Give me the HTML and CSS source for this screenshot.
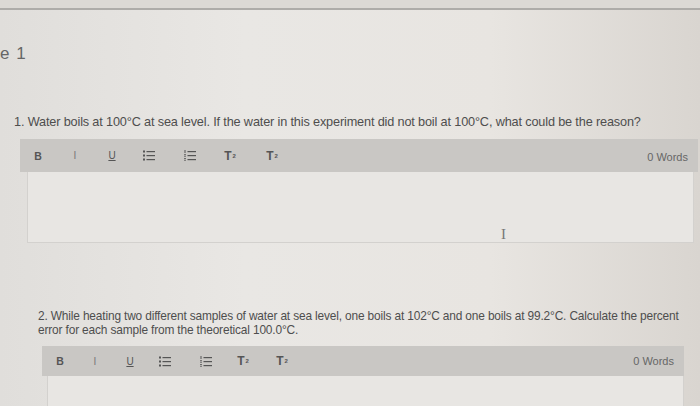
FILE: index.html
```html
<!DOCTYPE html>
<html>
<head>
<meta charset="utf-8">
<link rel="stylesheet" href="styles.css">
</head>
<body>
<div class="page">
  <div class="topstrip"></div>
  <div class="title">e 1</div>

  <section class="q q1">
    <p class="prompt">1. Water boils at 100°C at sea level. If the water in this experiment did not boil at 100°C, what could be the reason?</p>
    <div class="editor">
      <div class="toolbar">
        <div class="tools">
          <span class="tool b">B</span>
          <span class="tool i">I</span>
          <span class="tool u">U</span>
          <span class="tool ul"><svg width="12" height="11" viewBox="0 0 12 11"><g fill="#555"><rect x="0" y="0.5" width="2" height="2"/><rect x="0" y="4.5" width="2" height="2"/><rect x="0" y="8.5" width="2" height="2"/><rect x="3.5" y="1" width="8.5" height="1.2"/><rect x="3.5" y="5" width="8.5" height="1.2"/><rect x="3.5" y="9" width="8.5" height="1.2"/></g></svg></span>
          <span class="tool ol"><svg width="12" height="11" viewBox="0 0 12 11"><g fill="#555"><rect x="0.5" y="0" width="1" height="3"/><rect x="0" y="4.3" width="2" height="0.8"/><rect x="0" y="5.8" width="2" height="0.8"/><rect x="0" y="8" width="2" height="0.8"/><rect x="0" y="9.8" width="2" height="0.8"/><rect x="3.5" y="1" width="8.5" height="1.2"/><rect x="3.5" y="5" width="8.5" height="1.2"/><rect x="3.5" y="9" width="8.5" height="1.2"/></g></svg></span>
          <span class="tool t tsup">T<sup>2</sup></span>
          <span class="tool t tsub">T<sub>2</sub></span>
        </div>
        <span class="words">0 Words</span>
      </div>
      <div class="body body1"><span class="cursor">I</span></div>
    </div>
  </section>

  <section class="q q2">
    <p class="prompt">2. While heating two different samples of water at sea level, one boils at 102°C and one boils at 99.2°C. Calculate the percent error for each sample from the theoretical 100.0°C.</p>
    <div class="editor">
      <div class="toolbar">
        <div class="tools">
          <span class="tool b">B</span>
          <span class="tool i">I</span>
          <span class="tool u">U</span>
          <span class="tool ul"><svg width="12" height="11" viewBox="0 0 12 11"><g fill="#555"><rect x="0" y="0.5" width="2" height="2"/><rect x="0" y="4.5" width="2" height="2"/><rect x="0" y="8.5" width="2" height="2"/><rect x="3.5" y="1" width="8.5" height="1.2"/><rect x="3.5" y="5" width="8.5" height="1.2"/><rect x="3.5" y="9" width="8.5" height="1.2"/></g></svg></span>
          <span class="tool ol"><svg width="12" height="11" viewBox="0 0 12 11"><g fill="#555"><rect x="0.5" y="0" width="1" height="3"/><rect x="0" y="4.3" width="2" height="0.8"/><rect x="0" y="5.8" width="2" height="0.8"/><rect x="0" y="8" width="2" height="0.8"/><rect x="0" y="9.8" width="2" height="0.8"/><rect x="3.5" y="1" width="8.5" height="1.2"/><rect x="3.5" y="5" width="8.5" height="1.2"/><rect x="3.5" y="9" width="8.5" height="1.2"/></g></svg></span>
          <span class="tool t tsup">T<sup>2</sup></span>
          <span class="tool t tsub">T<sub>2</sub></span>
        </div>
        <span class="words">0 Words</span>
      </div>
      <div class="body body2"></div>
    </div>
  </section>
</div>
</body>
</html>
```

FILE: styles.css
```css
* { box-sizing: border-box; }
html, body { margin: 0; padding: 0; }
body {
  width: 700px;
  height: 406px;
  overflow: hidden;
  font-family: "Liberation Sans", Arial, sans-serif;
  color: #555;
  background: linear-gradient(90deg, #e0dedb 0%, #e9e7e4 35%, #e8e5e1 70%, #d9d5d0 100%);
}
.page { display: flex; flex-direction: column; }
.topstrip {
  height: 10px;
  background: #dcd9d5;
  border-bottom: 2px solid #aeaca9;
}
.title {
  margin-top: 34px;
  font-size: 17px;
  line-height: 20px;
  color: #666;
  letter-spacing: 1px;
}
.q { display: flex; flex-direction: column; }
.prompt { margin: 0; }
.q1 { margin-top: 50px; padding-left: 14px; padding-right: 2px; }
.q1 .prompt { font-size: 12.7px; line-height: 16px; color: #4e4e4e; letter-spacing: -0.15px; white-space: nowrap; }
.q1 .editor { margin-top: 9px; margin-left: 6px; }
.toolbar {
  display: flex;
  align-items: center;
  justify-content: space-between;
  background: #c9c7c4;
}
.tools { display: flex; align-items: center; }
.tool {
  display: inline-flex;
  align-items: center;
  justify-content: center;
  width: 14px;
  font-size: 10px;
  color: #555;
}
.tool.b { font-weight: bold; font-size: 10.5px; }
.tool.i { font-size: 10px; color: #777; }
.tool.u { text-decoration: underline; font-size: 10px; }
.tool.t { font-weight: bold; font-size: 12px; }
.tool sup { font-size: 6px; vertical-align: 6px; margin-left: 1px; }
.tool sub { font-size: 6px; vertical-align: -2px; margin-left: 1px; }

.q1 .toolbar { height: 33px; padding: 0 10px 0 11px; }
.q1 .tools { gap: 23px; }
.q1 .tool.ol { margin-left: 4px; }
.q1 .tool.tsup { margin-left: 3px; }
.q1 .tool.tsub { margin-left: 5px; }

.words { font-size: 11px; color: #666; }
.q1 .words { margin-top: 3px; }
.body {
  border: 1px solid #d3d1ce;
  border-top: none;
  background: #e8e6e3;
  position: relative;
}
.body1 { height: 71px; margin-left: 7px; margin-right: 4px; }
.cursor {
  position: absolute;
  left: 473px;
  bottom: -1px;
  font-family: "Liberation Serif", serif;
  font-size: 15px;
  color: #777;
}
.q2 { margin-top: 66px; padding-left: 38px; padding-right: 14px; }
.q2 .prompt { font-size: 11.9px; line-height: 14px; color: #4e4e4e; letter-spacing: -0.15px; }
.q2 .editor { margin-top: 9px; margin-left: 4px; margin-right: 2px; }
.q2 .toolbar { height: 30px; padding: 0 10px 0 11px; }
.q2 .tools { gap: 21px; }
.q2 .tool.ol { margin-left: 6px; }
.q2 .tool.tsup { margin-left: 2px; }
.q2 .tool.tsub { margin-left: 4px; }
.body2 { height: 40px; margin-left: 5px; }
```
